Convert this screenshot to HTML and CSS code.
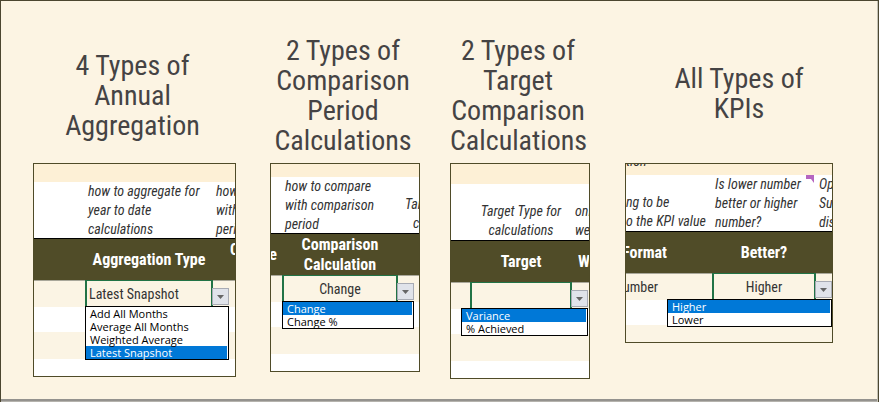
FILE: index.html
```html
<!DOCTYPE html>
<html lang="en">
<head>
<meta charset="utf-8">
<title>KPI calculation types</title>
<link rel="stylesheet" href="styles.css">
</head>
<body>
<main class="board">
  <section class="feature feature-aggregation">
    <h2 class="title">4 Types of<br>Annual<br>Aggregation</h2>
    <div class="card">
      <table class="sheet">
        <colgroup><col class="col-lead"><col class="col-main"><col></colgroup>
        <tbody>
          <tr class="band"><td></td><td></td><td></td></tr>
          <tr class="notes"><td></td><td><div class="note">how to aggregate for<br>year to date<br>calculations</div></td><td><div class="note">how<br>with<br>period</div></td></tr>
          <tr class="head"><th></th><th scope="col">Aggregation Type</th><th scope="col" class="spill top">Co</th></tr>
          <tr class="entry"><td></td><td class="active"><select class="value" aria-label="Aggregation type"><option>Latest Snapshot</option></select>
            <button class="arrow" aria-label="Show aggregation types"><svg viewBox="0 0 15 15"><path d="M4 6h7l-3.500 4z"/></svg></button>
            <ul class="menu" role="listbox" aria-label="Aggregation types"><li role="option">Add All Months</li><li role="option">Average All Months</li><li role="option">Weighted Average</li><li role="option" aria-selected="true">Latest Snapshot</li></ul></td><td></td></tr>
          <tr class="plain"><td></td><td></td><td></td></tr>
          <tr class="tint"><td></td><td></td><td></td></tr>
          <tr class="last"><td></td><td></td><td></td></tr>
        </tbody>
      </table>
    </div>
  </section>

  <section class="feature feature-comparison">
    <h2 class="title">2 Types of<br>Comparison<br>Period<br>Calculations</h2>
    <div class="card">
      <table class="sheet">
        <colgroup><col class="col-lead"><col class="col-main"><col></colgroup>
        <tbody>
          <tr class="band"><td></td><td></td><td></td></tr>
          <tr class="notes"><td></td><td><div class="note">how to compare<br>with comparison<br>period</div></td><td><div class="note note-next">Target<br><span class="inset">calc</span></div></td></tr>
          <tr class="head"><th class="lead-end">e</th><th scope="col" class="two">Comparison<br>Calculation</th><th></th></tr>
          <tr class="entry"><td></td><td class="active"><select class="value centered" aria-label="Comparison calculation"><option>Change</option></select>
            <button class="arrow" aria-label="Show comparison calculations"><svg viewBox="0 0 15 15"><path d="M4 6h7l-3.500 4z"/></svg></button>
            <ul class="menu" role="listbox" aria-label="Comparison calculations"><li role="option" aria-selected="true">Change</li><li role="option">Change %</li></ul></td><td></td></tr>
          <tr class="plain"><td></td><td></td><td></td></tr>
          <tr class="tint"><td></td><td></td><td></td></tr>
          <tr class="last"><td></td><td></td><td></td></tr>
        </tbody>
      </table>
    </div>
  </section>

  <section class="feature feature-target">
    <h2 class="title">2 Types of<br>Target<br>Comparison<br>Calculations</h2>
    <div class="card">
      <table class="sheet">
        <colgroup><col class="col-lead"><col class="col-main"><col></colgroup>
        <tbody>
          <tr class="band"><td></td><td></td><td></td></tr>
          <tr class="notes"><td></td><td><div class="note note-center">Target Type for<br>calculations</div></td><td><div class="note">only<br>wei</div></td></tr>
          <tr class="head"><th></th><th scope="col">Target</th><th scope="col" class="spill">W</th></tr>
          <tr class="entry"><td></td><td class="active"><select class="value centered" aria-label="Target"><option></option></select>
            <button class="arrow" aria-label="Show target types"><svg viewBox="0 0 15 15"><path d="M4 6h7l-3.500 4z"/></svg></button>
            <ul class="menu" role="listbox" aria-label="Target types"><li role="option" aria-selected="true">Variance</li><li role="option">% Achieved</li></ul></td><td></td></tr>
          <tr class="plain"><td></td><td></td><td></td></tr>
          <tr class="tint"><td></td><td></td><td></td></tr>
          <tr class="last"><td></td><td></td><td></td></tr>
        </tbody>
      </table>
    </div>
  </section>

  <section class="feature feature-kpi">
    <h2 class="title">All Types of<br>KPIs</h2>
    <div class="card">
      <table class="sheet">
        <colgroup><col class="col-lead"><col class="col-main"><col></colgroup>
        <tbody>
          <tr class="band"><td><div class="cut">tion</div></td><td></td><td></td></tr>
          <tr class="notes"><td><div class="note note-lead">ng to be<br>o the KPI value</div></td><td><div class="note">Is lower number<br>better or higher<br>number?</div><svg class="flag" viewBox="0 0 8 8"><path d="M0 0h8v8L5 4H0z"/></svg></td><td><div class="note">Op<br>Su<br>dis</div></td></tr>
          <tr class="head"><th scope="col" class="lead-end">Format</th><th scope="col">Better?</th><th></th></tr>
          <tr class="entry"><td class="lead-value">Number</td><td class="active"><select class="value centered" aria-label="Better"><option>Higher</option></select>
            <button class="arrow" aria-label="Show better options"><svg viewBox="0 0 15 15"><path d="M4 6h7l-3.500 4z"/></svg></button>
            <ul class="menu" role="listbox" aria-label="Better options"><li role="option" aria-selected="true">Higher</li><li role="option">Lower</li></ul></td><td></td></tr>
          <tr class="plain"><td></td><td></td><td></td></tr>
          <tr class="last tinted"><td></td><td></td><td></td></tr>
        </tbody>
      </table>
    </div>
  </section>
</main>
</body>
</html>
```
FILE: styles.css
```css
* { box-sizing: border-box; }

body {
  margin: 0;
  background: #fcf4e3;
  color: #454344;
}

.board {
  display: flex;
  align-items: flex-start;
  min-height: 100vh;
  padding: 35px 45px 24px 32px;
  border: 1px solid #4b4630;
  box-shadow: inset -1px 0 #c4c1b4, inset 0 -2px #b5b3ad, inset 0 -4px #94928e;
}

.feature { min-width: 0; }
.feature-aggregation { flex: 203 1 0; margin-right: 34px; }
.feature-comparison { flex: 150 1 0; margin-right: 30px; }
.feature-target { flex: 140 1 0; margin-right: 35px; }
.feature-kpi { flex: 208 1 0; }

.title {
  display: grid;
  align-content: center;
  justify-content: center;
  height: 120px;
  margin: 0 0 7px;
  padding-right: 4px;
  font: 400 28px/30px "Roboto Condensed", Roboto, sans-serif;
  text-align: center;
  white-space: nowrap;
}
.title { display: block; }
.feature-kpi .title { padding: 0 0 4px 20px; }

.card {
  overflow: hidden;
  border: 1px solid #4f4b28;
  background: #fff;
}

.sheet {
  width: 100%;
  table-layout: fixed;
  border-spacing: 0;
  font: 14px/19px "Roboto Condensed", Roboto, sans-serif;
  color: #333;
}

.sheet td, .sheet th { padding: 0; white-space: nowrap; }

.feature-aggregation .col-lead { width: 51px; }
.feature-aggregation .col-main { width: 128px; }
.feature-comparison .col-lead { width: 11px; }
.feature-comparison .col-main { width: 116px; }
.feature-target .col-lead { width: 19px; }
.feature-target .col-main { width: 102px; }
.feature-kpi .col-lead { width: 86px; }
.feature-kpi .col-main { width: 104px; }

.band td { height: 18px; background: #fdf0d6; }
.feature-comparison .band td { height: 13px; }
.feature-target .band td { height: 20px; }
.feature-kpi .band td { height: 11px; }

.cut {
  display: flex;
  align-items: flex-end;
  height: 11px;
  padding-bottom: 4px;
  overflow: hidden;
  font-style: italic;
}

.notes td {
  position: relative;
  height: 57px;
  border-bottom: 1px solid #000;
}
.note {
  align-content: end;
  height: 56px;
  padding-left: 3px;
  font-style: italic;
}
.note-center { padding: 0; text-align: center; }
.note-next { padding-left: 7px; }
.inset { padding-left: 8px; }
.note-lead { padding-left: 0; }

.flag {
  position: absolute;
  top: 0;
  right: 2px;
  width: 8px;
  height: 8px;
  fill: #b565c0;
}

.head th {
  height: 41px;
  background: #504c28;
  color: #fff;
  font-size: 16px;
}
.head .two { line-height: 20px; }
.head .top { padding-bottom: 20px; }
.head .spill { padding-left: 17px; text-align: left; }
.feature-target .head .spill { padding-left: 6px; }
.sheet .lead-end, .sheet .lead-value { direction: rtl; text-align: right; }
.feature-comparison .sheet .lead-end { padding-right: 5px; }
.feature-kpi .sheet .lead-end { padding-right: 45px; }
.feature-kpi .sheet .lead-value { padding-right: 54px; }

.entry td {
  height: 27px;
  border-top: 1px solid #a9a79a;
  background: #fbf4e4;
}

.entry .active {
  position: relative;
  border: solid #217346;
  border-width: 1px 2px 0;
}

.value {
  display: block;
  width: 100%;
  height: 26px;
  padding: 0 0 0 2px;
  border: 0;
  appearance: none;
  background: transparent;
  color: #333;
  font: inherit;
}
.centered { padding: 0; text-align: center; text-align-last: center; }

.arrow {
  position: absolute;
  top: 7px;
  left: calc(100% + 1px);
  width: 17px;
  height: 17px;
  padding: 0;
  border: 1px solid #a8abb4;
  background: #e0e3ea;
}
.arrow svg { display: block; width: 15px; height: 15px; fill: #666; }

.menu {
  position: absolute;
  z-index: 1;
  top: 25px;
  left: -2px;
  right: -18px;
  margin: 0;
  padding: 0 1px 0 0;
  border: 1px solid #000;
  background: #fff;
  color: #000;
  font: 11px/13px "Open Sans", sans-serif;
  list-style: none;
}
.feature-target .menu { left: -11px; }
.feature-kpi .menu { left: -47px; }
.menu li { padding-left: 4px; }
.menu [aria-selected="true"] { background: #0078d7; color: #fff; }

.plain td { height: 25px; background: #fff; }
.tint td { height: 27px; background: #fbf4e4; }
.last td { height: 17px; background: #fff; }
.tinted td { background: #fbf4e4; }
```
